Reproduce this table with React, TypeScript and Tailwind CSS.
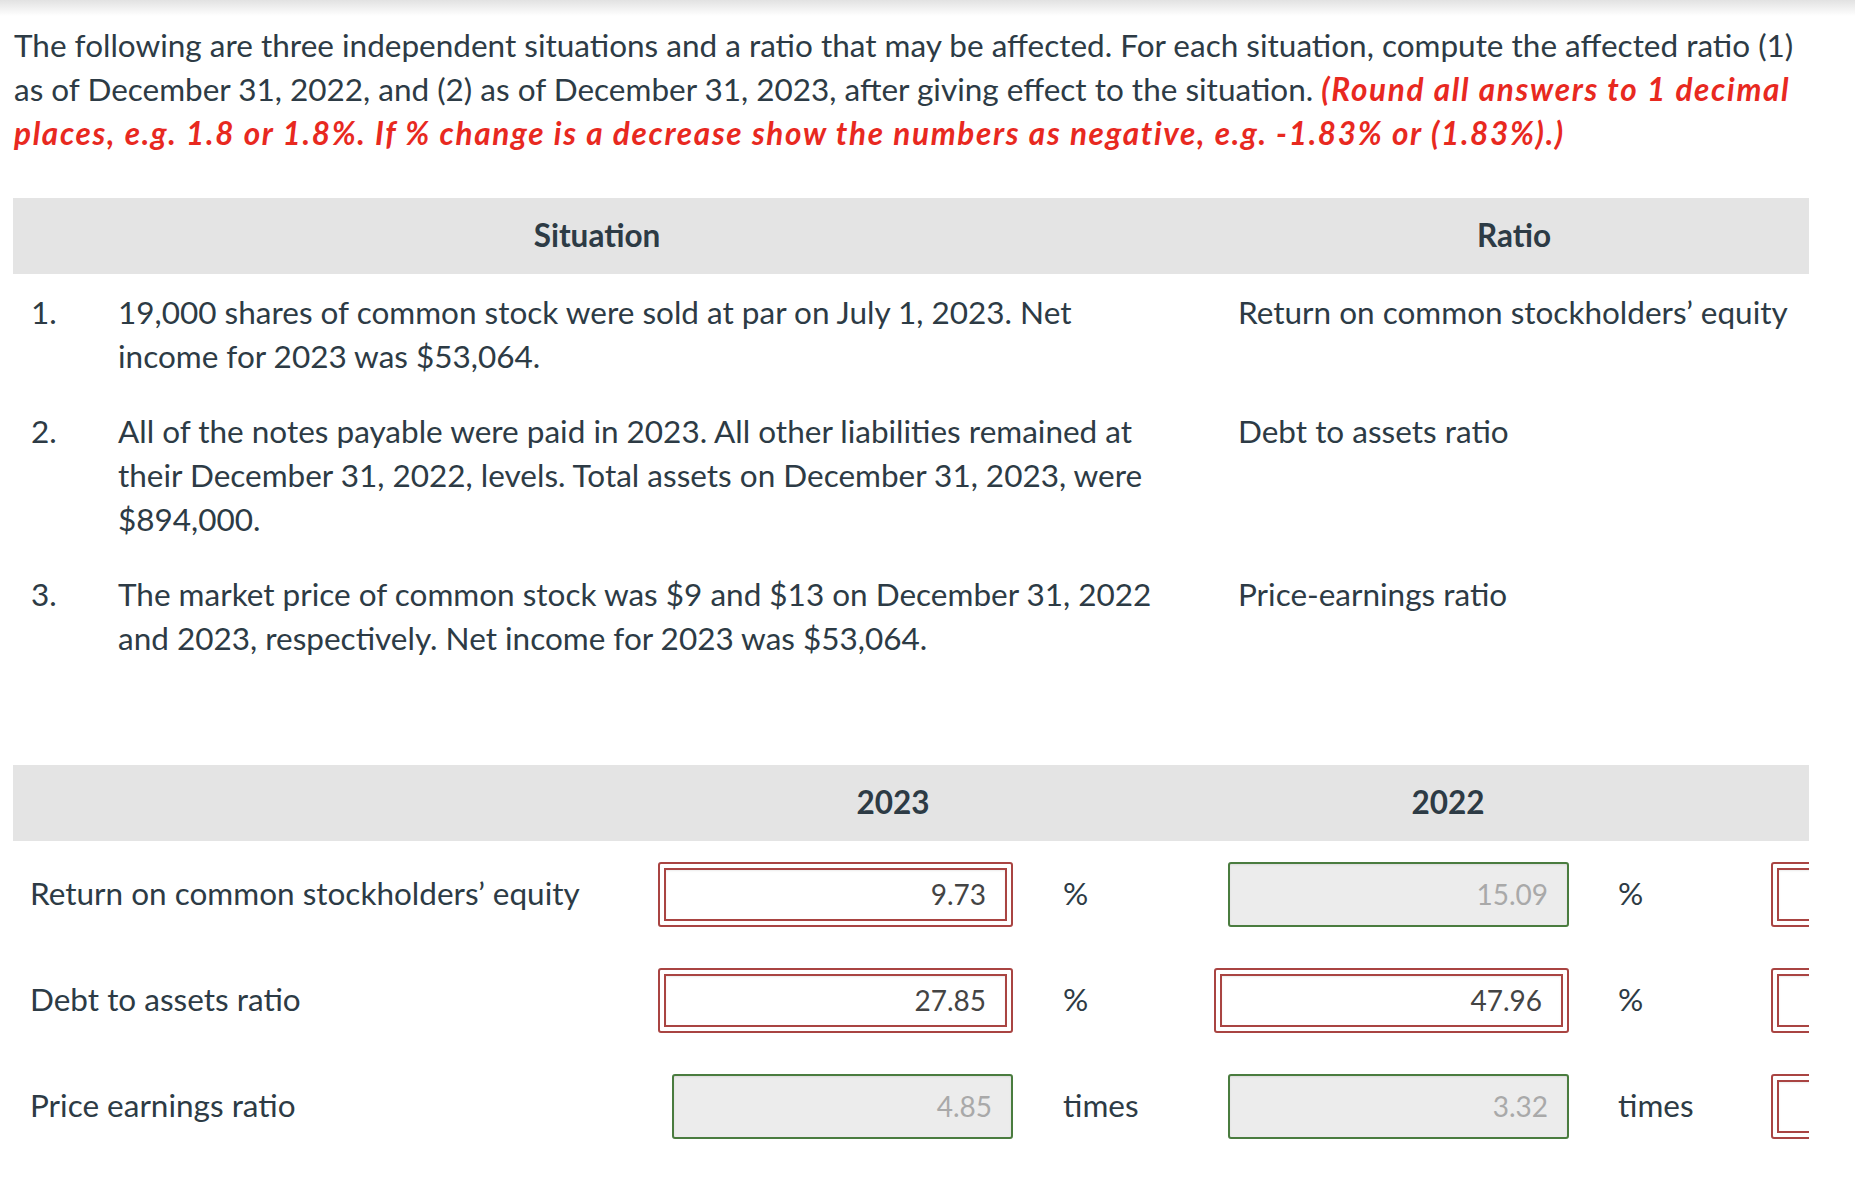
import React from "react";

const situations = [
  {
    n: "1.",
    text: "19,000 shares of common stock were sold at par on July 1, 2023. Net income for 2023 was $53,064.",
    ratio: "Return on common stockholders’ equity",
  },
  {
    n: "2.",
    text: "All of the notes payable were paid in 2023. All other liabilities remained at their December 31, 2022, levels. Total assets on December 31, 2023, were $894,000.",
    ratio: "Debt to assets ratio",
  },
  {
    n: "3.",
    text: "The market price of common stock was $9 and $13 on December 31, 2022 and 2023, respectively. Net income for 2023 was $53,064.",
    ratio: "Price-earnings ratio",
  },
];

type Answer = { value: string; ok: boolean };

const answers: {
  label: string;
  y2023: Answer;
  unit2023: string;
  y2022: Answer;
  unit2022: string;
}[] = [
  {
    label: "Return on common stockholders’ equity",
    y2023: { value: "9.73", ok: false },
    unit2023: "%",
    y2022: { value: "15.09", ok: true },
    unit2022: "%",
  },
  {
    label: "Debt to assets ratio",
    y2023: { value: "27.85", ok: false },
    unit2023: "%",
    y2022: { value: "47.96", ok: false },
    unit2022: "%",
  },
  {
    label: "Price earnings ratio",
    y2023: { value: "4.85", ok: true },
    unit2023: "times",
    y2022: { value: "3.32", ok: true },
    unit2022: "times",
  },
];

function AnswerBox({ value, ok }: Answer) {
  if (ok) {
    return (
      <div className="flex h-[65px] w-[341px] shrink-0 items-center justify-end rounded-[3px] border-2 border-[#4a7c3f] bg-[#ececec] pr-[19px] text-[28px] text-[#a9a9a9] shadow-[inset_0_1px_2px_rgba(0,0,0,0.08)]">
        {value}
      </div>
    );
  }
  return (
    <div className="h-[65px] w-[355px] shrink-0 rounded-[3px] border-2 border-[#a94442] bg-white p-[4px]">
      <div className="flex h-full items-center justify-end border-2 border-[#a94442] pr-[19px] text-[28px] text-[#444] shadow-[inset_0_1px_2px_rgba(0,0,0,0.08)]">
        {value}
      </div>
    </div>
  );
}

export default function App() {
  return (
    <div className="min-h-screen bg-white font-['Lato',sans-serif] text-[31.5px] text-[#2d3b45]">
      {/* top shadow from the page header */}
      <div className="h-4 bg-gradient-to-b from-[#e2e2e2] to-white" />

      <div className="ml-[13px] w-[1796px] overflow-hidden">
        <p className="mt-[7px] pl-px leading-[44px]">
          The following are three independent situations and a ratio that may be affected. For each situation,
          compute the affected ratio (1) as of December 31, 2022, and (2) as of December 31, 2023, after giving
          effect to the situation.{" "}
          <em className="font-bold tracking-[0.053em] text-[#e8291f]">
            (Round all answers to 1 decimal places, e.g. 1.8 or 1.8%. If % change is a decrease show the numbers
            as negative, e.g. -1.83% or (1.83%).)
          </em>
        </p>

        {/* Situations */}
        <div className="mt-[43px] grid grid-cols-[105px_1050px_51px_590px]">
          <div className="col-span-3 flex h-[76px] items-center justify-center bg-[#e4e4e4] pr-[38px] font-bold">
            Situation
          </div>
          <div className="flex h-[76px] items-center justify-center bg-[#e4e4e4] font-bold">Ratio</div>

          {situations.map((s) => (
            <React.Fragment key={s.n}>
              <div className="pl-[18px] pt-[16px] pb-[15px] leading-[44px]">{s.n}</div>
              <div className="pt-[16px] pb-[15px] leading-[44px]">{s.text}</div>
              <div />
              <div className="pl-[19px] pt-[16px] pb-[15px] leading-[44px]">{s.ratio}</div>
            </React.Fragment>
          ))}
        </div>

        {/* Answers */}
        <div className="mt-[90px] grid grid-cols-[632px_392px_104px_452px_162px_54px]">
          <div className="flex h-[76px] items-center bg-[#e4e4e4]" />
          <div className="col-span-2 flex h-[76px] items-center justify-center bg-[#e4e4e4] font-bold">2023</div>
          <div className="col-span-2 flex h-[76px] items-center justify-center bg-[#e4e4e4] font-bold">2022</div>
          <div className="h-[76px] bg-[#e4e4e4]" />

          {answers.map((r) => (
            <React.Fragment key={r.label}>
              <div className="flex h-[106px] items-center pl-[17px]">{r.label}</div>
              <div className="flex h-[106px] items-center justify-end pr-[24px]">
                <AnswerBox {...r.y2023} />
              </div>
              <div className="flex h-[106px] items-center pl-[26px]">{r.unit2023}</div>
              <div className="flex h-[106px] items-center justify-end pr-[24px]">
                <AnswerBox {...r.y2022} />
              </div>
              <div className="flex h-[106px] items-center pl-[25px]">{r.unit2022}</div>
              <div className="flex h-[106px] min-w-0 items-center overflow-hidden pl-[16px]">
                <AnswerBox value="" ok={false} />
              </div>
            </React.Fragment>
          ))}
        </div>
      </div>
    </div>
  );
}
